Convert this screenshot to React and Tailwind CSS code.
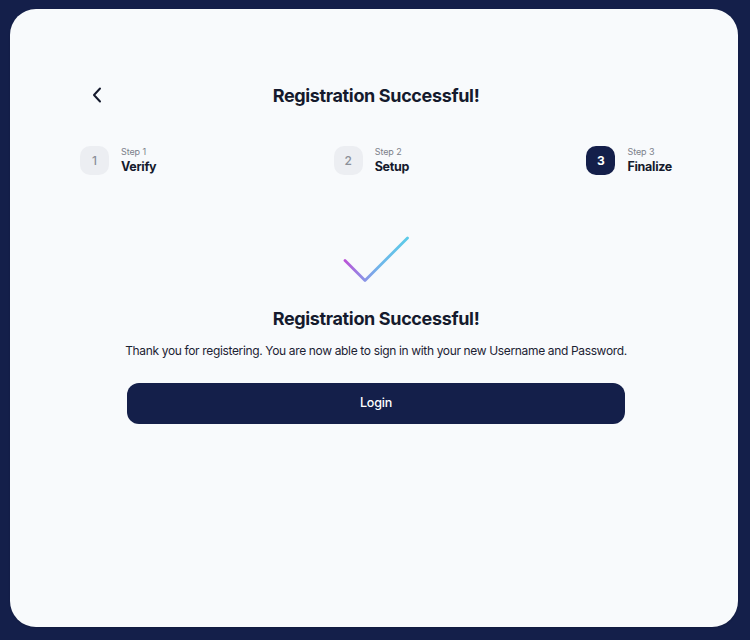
import React from "react";

function Step({ n, label, active }) {
  return (
    <div className="flex items-center gap-[12px]">
      <div
        className={
          "flex h-[29px] w-[29px] items-center justify-center rounded-[10px] text-[12px] " +
          (active ? "bg-[#141f4a] font-bold text-white" : "bg-[#eceef2] font-medium text-[#8b9099]")
        }
      >
        {n}
      </div>
      <div className="flex flex-col">
        <span className="text-[9px] leading-[12px] tracking-[-0.1px] text-[#7b808a]">Step {n}</span>
        <span className="text-[12.5px] font-bold leading-[17px] tracking-[-0.3px] text-[#151a2d]">{label}</span>
      </div>
    </div>
  );
}

export default function App() {
  return (
    <div
      className="flex h-[640px] w-[750px] bg-[#141f4a] pl-[10px] pr-[12px] pt-[9px] pb-[13px]"
      style={{ fontFamily: '"Inter", "Liberation Sans", sans-serif' }}
    >
      <div className="flex flex-1 flex-col rounded-[26px] bg-[#f8fafc] pl-[70px] pr-[66px] pt-[66px] shadow-[0_1px_2px_rgba(0,0,0,0.15)]">
        <div className="relative flex h-[40px] items-center justify-center">
          <button className="absolute left-[12px] top-[12px] text-[#151a2d]">
            <svg width="10" height="16" viewBox="0 0 10 16" fill="none">
              <path d="M8 1.5 L2 8 L8 14.5" stroke="currentColor" strokeWidth="2" strokeLinecap="round" strokeLinejoin="round" />
            </svg>
          </button>
          <h1 className="text-[18px] font-bold tracking-[-0.35px] text-[#151a2d]">Registration Successful!</h1>
        </div>

        <div className="mt-[31px] flex items-center justify-between">
          <Step n={1} label="Verify" />
          <Step n={2} label="Setup" />
          <Step n={3} label="Finalize" active />
        </div>

        <div className="mt-[61px] flex flex-col items-center">
          <svg width="66" height="48" viewBox="0 0 66 48" fill="none">
            <defs>
              <linearGradient id="chk" x1="1" y1="0" x2="65" y2="0" gradientUnits="userSpaceOnUse">
                <stop offset="0" stopColor="#bd4fd6" />
                <stop offset="0.3" stopColor="#8d8fe6" />
                <stop offset="0.55" stopColor="#6fb6ea" />
                <stop offset="1" stopColor="#5ccbe8" />
              </linearGradient>
            </defs>
            <path d="M2 24.5 L22 44.5 L64.5 2" stroke="url(#chk)" strokeWidth="2.8" strokeLinecap="round" strokeLinejoin="round" />
          </svg>

          <h2 className="mt-[23px] text-[18px] font-bold leading-[24px] tracking-[-0.35px] text-[#151a2d]">
            Registration Successful!
          </h2>
          <p className="mt-[10px] text-[12px] leading-[20px] tracking-[-0.35px] text-[#1c2233]">
            Thank you for registering. You are now able to sign in with your new Username and Password.
          </p>
          <button className="mt-[22px] h-[41px] w-[498px] rounded-[12px] bg-[#141f4a] text-[12.5px] font-medium tracking-[-0.2px] text-white">
            Login
          </button>
        </div>
      </div>
    </div>
  );
}
